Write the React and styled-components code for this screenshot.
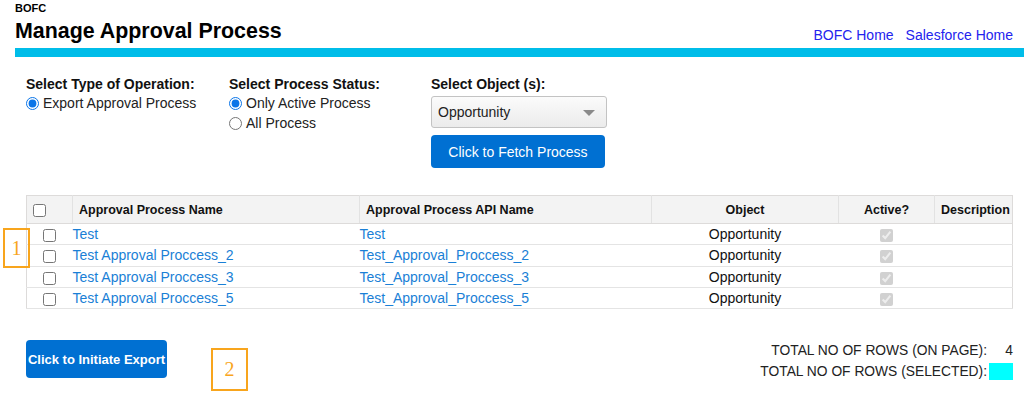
import React, { useState } from "react";
import styled, { createGlobalStyle } from "styled-components";

const GlobalStyle = createGlobalStyle`
  html, body { margin: 0; padding: 0; background: #fff; }
  body { font-family: "Liberation Sans", Arial, sans-serif; color: #000; }
`;

const rows = [
  { name: "Test", api: "Test" },
  { name: "Test Approval Proccess_2", api: "Test_Approval_Proccess_2" },
  { name: "Test Approval Proccess_3", api: "Test_Approval_Proccess_3" },
  { name: "Test Approval Proccess_5", api: "Test_Approval_Proccess_5" },
];

const Page = styled.div`
  position: relative;
  width: 1024px;
  height: 417px;
  overflow: hidden;
`;

const Header = styled.header`
  padding: 2px 11px 0 15px;
`;

const Org = styled.div`
  font-size: 11px;
  font-weight: 700;
  line-height: 13px;
`;

const TitleRow = styled.div`
  display: flex;
  justify-content: space-between;
  align-items: flex-end;
  margin-top: 2px;
  height: 27px;
`;

const Title = styled.h1`
  margin: 0;
  font-size: 21.4px;
  font-weight: 700;
  line-height: 26px;
`;

const Links = styled.nav`
  display: flex;
  gap: 12px;
  padding-bottom: 1px;
`;

const TopLink = styled.a`
  color: #2323ee;
  text-decoration: none;
  font-size: 14px;
`;

const Bar = styled.div`
  height: 9px;
  margin-left: 15px;
  margin-top: 4px;
  background: #00bde9;
`;

const Form = styled.section`
  display: grid;
  grid-template-columns: 203px 202px 180px;
  padding: 18px 0 0 26px;
`;

const Field = styled.div`
  display: flex;
  flex-direction: column;
  align-items: flex-start;
`;

const Label = styled.div`
  font-size: 14px;
  font-weight: 700;
  line-height: 18px;
  color: #111;
`;

const Radio = styled.label`
  display: flex;
  align-items: center;
  font-size: 14px;
  line-height: 20px;
  color: #222;
  input {
    margin: 0 4px 0 0;
    width: 13px;
    height: 13px;
    accent-color: #0b75e8;
  }
`;

const SelectBox = styled.div`
  position: relative;
  margin-top: 3px;
  width: 176px;
  height: 32px;
  box-sizing: border-box;
  border: 1px solid #c3c3c3;
  border-radius: 3px;
  background: linear-gradient(#fbfbfb, #ebebeb);
  display: flex;
  align-items: center;
  padding-left: 6px;
  font-size: 14px;
  color: #222;
  &::after {
    content: "";
    position: absolute;
    right: 11px;
    top: 13px;
    border-left: 6px solid transparent;
    border-right: 6px solid transparent;
    border-top: 6px solid #8a8a8a;
  }
`;

const Button = styled.button`
  display: flex;
  align-items: center;
  justify-content: center;
  border: none;
  border-radius: 4px;
  background: #0070d2;
  color: #fff;
  font-family: "Liberation Sans", Arial, sans-serif;
  font-size: ${(p) => (p.$bold ? "13px" : "14px")};
  font-weight: ${(p) => (p.$bold ? 700 : 400)};
  width: ${(p) => p.$w}px;
  height: ${(p) => p.$h}px;
  padding: 0;
  margin-top: ${(p) => p.$mt || 0}px;
`;

const TableWrap = styled.div`
  margin: 27px 11px 0 26px;
`;

const Table = styled.table`
  width: 100%;
  border-collapse: collapse;
  border: 1px solid #dddbda;
  font-size: 14px;
  table-layout: fixed;
`;

const Th = styled.th`
  background: #f3f3f3;
  height: 27px;
  padding: 0 6px;
  font-size: 12.5px;
  font-weight: 700;
  color: #111;
  text-align: ${(p) => p.$align || "left"};
  border-left: 1px solid #e2e2e2;
  border-bottom: 1px solid #dddbda;
  &:first-child { border-left: none; }
`;

const Td = styled.td`
  height: 20.3px;
  padding: 0;
  text-align: ${(p) => p.$align || "left"};
  border-bottom: 1px solid #e4e4e4;
  color: #111;
  line-height: 20px;
`;

const CellLink = styled.a`
  color: #1a7fd6;
  text-decoration: none;
`;

const Check = styled.input.attrs({ type: "checkbox" })`
  width: 13px;
  height: 13px;
  margin: 0;
  vertical-align: middle;
`;

const Footer = styled.section`
  display: flex;
  justify-content: space-between;
  align-items: flex-start;
  padding: 31px 11px 0 26px;
`;

const Totals = styled.div`
  display: grid;
  grid-template-columns: auto 24px;
  column-gap: 2px;
  row-gap: 4px;
  margin-top: 2px;
  font-size: 13.8px;
  color: #222;
  line-height: 17px;
  justify-items: end;
`;

const Swatch = styled.div`
  width: 24px;
  height: 17px;
  background: #00ffff;
`;

const Marker = styled.div`
  position: absolute;
  left: ${(p) => p.$x}px;
  top: ${(p) => p.$y}px;
  width: ${(p) => p.$w}px;
  height: ${(p) => p.$h}px;
  box-sizing: border-box;
  border: 2px solid #f8a51d;
  color: #f8a51d;
  font-family: "Liberation Serif", "Times New Roman", serif;
  font-size: 20px;
  display: flex;
  align-items: center;
  justify-content: center;
`;

export default function App() {
  const [status, setStatus] = useState("active");

  return (
    <Page>
      <GlobalStyle />
      <Header>
        <Org>BOFC</Org>
        <TitleRow>
          <Title>Manage Approval Process</Title>
          <Links>
            <TopLink href="#">BOFC Home</TopLink>
            <TopLink href="#">Salesforce Home</TopLink>
          </Links>
        </TitleRow>
      </Header>
      <Bar />

      <Form>
        <Field>
          <Label>Select Type of Operation:</Label>
          <Radio>
            <input type="radio" name="op" defaultChecked />
            Export Approval Process
          </Radio>
        </Field>
        <Field>
          <Label>Select Process Status:</Label>
          <Radio>
            <input
              type="radio"
              name="status"
              checked={status === "active"}
              onChange={() => setStatus("active")}
            />
            Only Active Process
          </Radio>
          <Radio>
            <input
              type="radio"
              name="status"
              checked={status === "all"}
              onChange={() => setStatus("all")}
            />
            All Process
          </Radio>
        </Field>
        <Field>
          <Label>Select Object (s):</Label>
          <SelectBox>Opportunity</SelectBox>
          <Button $w={174} $h={33} $mt={7}>
            Click to Fetch Process
          </Button>
        </Field>
      </Form>

      <TableWrap>
        <Table>
          <colgroup>
            <col style={{ width: 46 }} />
            <col style={{ width: 287 }} />
            <col style={{ width: 292 }} />
            <col style={{ width: 187 }} />
            <col style={{ width: 96 }} />
            <col />
          </colgroup>
          <thead>
            <tr>
              <Th>
                <Check />
              </Th>
              <Th>Approval Process Name</Th>
              <Th>Approval Process API Name</Th>
              <Th $align="center">Object</Th>
              <Th $align="center">Active?</Th>
              <Th>Description</Th>
            </tr>
          </thead>
          <tbody>
            {rows.map((r) => (
              <tr key={r.api}>
                <Td $align="center">
                  <Check />
                </Td>
                <Td>
                  <CellLink href="#">{r.name}</CellLink>
                </Td>
                <Td>
                  <CellLink href="#">{r.api}</CellLink>
                </Td>
                <Td $align="center">Opportunity</Td>
                <Td $align="center">
                  <Check checked disabled readOnly />
                </Td>
                <Td />
              </tr>
            ))}
          </tbody>
        </Table>
      </TableWrap>

      <Footer>
        <Button $bold $w={141} $h={38}>
          Click to Initiate Export
        </Button>
        <Totals>
          <span>TOTAL NO OF ROWS (ON PAGE):</span>
          <span>4</span>
          <span>TOTAL NO OF ROWS (SELECTED):</span>
          <Swatch />
        </Totals>
      </Footer>

      <Marker $x={3} $y={228} $w={27} $h={40}>1</Marker>
      <Marker $x={211} $y={348} $w={37} $h={43}>2</Marker>
    </Page>
  );
}
